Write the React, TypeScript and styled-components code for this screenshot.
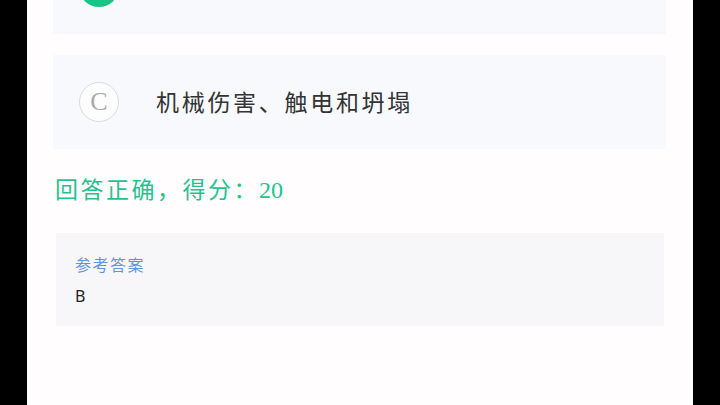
import React from 'react'
import styled, { createGlobalStyle } from 'styled-components'

const GlobalStyle = createGlobalStyle`
  html, body {
    margin: 0;
    padding: 0;
    background: #000;
    overflow: hidden;
  }
  body {
    font-family: "Noto Sans CJK SC", "Noto Sans", sans-serif;
  }
`

const options = [
  { letter: 'B', text: '', selected: true },
  { letter: 'C', text: '机械伤害、触电和坍塌', selected: false },
]

const App: React.FC = () => {
  return (
    <>
      <GlobalStyle />
      <StyledPage>
        <StyledOptionList>
          {options.map((option) => (
            <StyledOption key={option.letter}>
              <StyledBadge selected={option.selected}>
                {option.selected ? '' : option.letter}
              </StyledBadge>
              <StyledOptionText>{option.text}</StyledOptionText>
            </StyledOption>
          ))}
        </StyledOptionList>
        <StyledResult>
          回答正确，得分：<StyledScore>20</StyledScore>
        </StyledResult>
        <StyledAnswerBox>
          <StyledAnswerLabel>参考答案</StyledAnswerLabel>
          <StyledAnswerValue>B</StyledAnswerValue>
        </StyledAnswerBox>
      </StyledPage>
    </>
  )
}

const StyledPage = styled.div`
  width: 666px;
  height: 405px;
  margin-left: 27px;
  background: #fffdfe;
  box-sizing: border-box;
  padding: 0 27px 0 26px;
  overflow: hidden;
`

const StyledOptionList = styled.div`
  display: flex;
  flex-direction: column;
  gap: 21px;
  margin-top: -60px;
`

const StyledOption = styled.div`
  display: flex;
  align-items: center;
  height: 94px;
  padding-left: 26px;
  background: #f7f9fc;
  box-sizing: border-box;
`

const StyledBadge = styled.div<{ selected: boolean }>`
  width: 40px;
  height: 40px;
  border-radius: 50%;
  box-sizing: border-box;
  display: flex;
  align-items: center;
  justify-content: center;
  flex-shrink: 0;
  background: ${props => (props.selected ? '#17c687' : '#fdfdfe')};
  border: ${props => (props.selected ? 'none' : '1.5px solid #dcdcdc')};
  color: #a9a9a9;
  font-family: "Liberation Serif", serif;
  font-size: 26px;
`

const StyledOptionText = styled.div`
  margin-left: 37px;
  margin-bottom: 3px;
  color: #333;
  font-size: 23px;
  letter-spacing: 2.7px;
`

const StyledResult = styled.div`
  margin-top: 23px;
  margin-left: 2px;
  color: #1fc48d;
  font-size: 23px;
  letter-spacing: 2.5px;
  line-height: 32px;
`

const StyledScore = styled.span`
  font-family: "Liberation Serif", serif;
  font-size: 24px;
  letter-spacing: 0;
`

const StyledAnswerBox = styled.div`
  margin: 27px 2px 0 3px;
  height: 93px;
  background: #f7f7f9;
  box-sizing: border-box;
  padding: 19px 19px 0;
`

const StyledAnswerLabel = styled.div`
  color: #5d95e4;
  font-size: 16px;
  letter-spacing: 1.5px;
  line-height: 24px;
`

const StyledAnswerValue = styled.div`
  margin-top: 8px;
  color: #222;
  font-family: "Noto Sans", sans-serif;
  font-size: 16px;
  line-height: 24px;
`

export default App
